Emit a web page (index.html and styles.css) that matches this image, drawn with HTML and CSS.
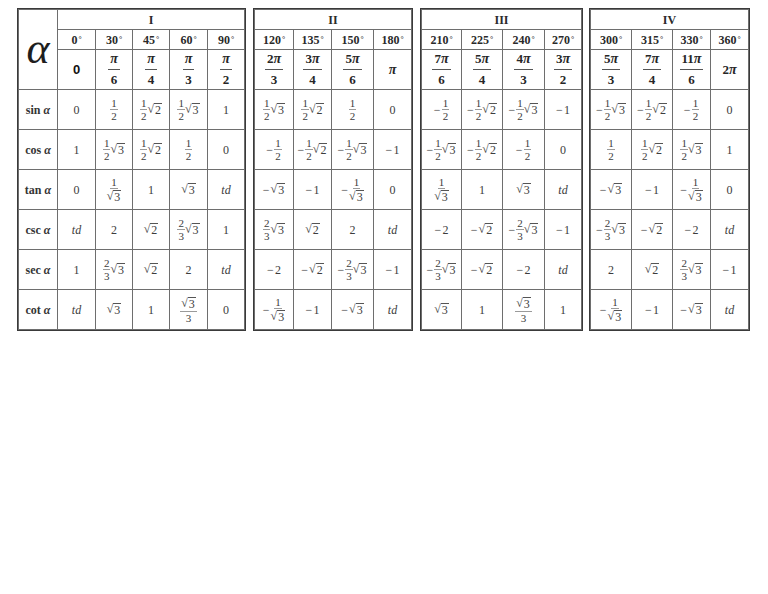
FILE: index.html
```html
<!DOCTYPE html>
<html>
<head>
<meta charset="utf-8">
<link rel="stylesheet" href="styles.css">
</head>
<body>
<div class="page">
  <div class="quad q1">
    <div class="c alpha">α</div>
    <div class="c roman span5">I</div>
    <div class="c deg">0<sup>°</sup></div><div class="c deg">30<sup>°</sup></div><div class="c deg">45<sup>°</sup></div><div class="c deg">60<sup>°</sup></div><div class="c deg">90<sup>°</sup></div>
    <div class="c rad zero">0</div>
    <div class="c rad"><span class="fr"><span class="n"><i>π</i></span><span class="d">6</span></span></div>
    <div class="c rad"><span class="fr"><span class="n"><i>π</i></span><span class="d">4</span></span></div>
    <div class="c rad"><span class="fr"><span class="n"><i>π</i></span><span class="d">3</span></span></div>
    <div class="c rad"><span class="fr"><span class="n"><i>π</i></span><span class="d">2</span></span></div>

    <div class="c lbl">sin <i>α</i></div>
    <div class="c">0</div>
    <div class="c"><span class="fs"><span class="n">1</span><span class="d">2</span></span></div>
    <div class="c"><span class="fs"><span class="n">1</span><span class="d">2</span></span><span class="rt">√<span class="rd">2</span></span></div>
    <div class="c"><span class="fs"><span class="n">1</span><span class="d">2</span></span><span class="rt">√<span class="rd">3</span></span></div>
    <div class="c">1</div>

    <div class="c lbl">cos <i>α</i></div>
    <div class="c">1</div>
    <div class="c"><span class="fs"><span class="n">1</span><span class="d">2</span></span><span class="rt">√<span class="rd">3</span></span></div>
    <div class="c"><span class="fs"><span class="n">1</span><span class="d">2</span></span><span class="rt">√<span class="rd">2</span></span></div>
    <div class="c"><span class="fs"><span class="n">1</span><span class="d">2</span></span></div>
    <div class="c">0</div>

    <div class="c lbl">tan <i>α</i></div>
    <div class="c">0</div>
    <div class="c"><span class="fs"><span class="n">1</span><span class="d"><span class="rt">√<span class="rd">3</span></span></span></span></div>
    <div class="c">1</div>
    <div class="c"><span class="rt">√<span class="rd">3</span></span></div>
    <div class="c td">td</div>

    <div class="c lbl">csc <i>α</i></div>
    <div class="c td">td</div>
    <div class="c">2</div>
    <div class="c"><span class="rt">√<span class="rd">2</span></span></div>
    <div class="c"><span class="fs"><span class="n">2</span><span class="d">3</span></span><span class="rt">√<span class="rd">3</span></span></div>
    <div class="c">1</div>

    <div class="c lbl">sec <i>α</i></div>
    <div class="c">1</div>
    <div class="c"><span class="fs"><span class="n">2</span><span class="d">3</span></span><span class="rt">√<span class="rd">3</span></span></div>
    <div class="c"><span class="rt">√<span class="rd">2</span></span></div>
    <div class="c">2</div>
    <div class="c td">td</div>

    <div class="c lbl">cot <i>α</i></div>
    <div class="c td">td</div>
    <div class="c"><span class="rt">√<span class="rd">3</span></span></div>
    <div class="c">1</div>
    <div class="c"><span class="fs"><span class="n"><span class="rt">√<span class="rd">3</span></span></span><span class="d">3</span></span></div>
    <div class="c">0</div>
  </div>

  <div class="quad q2">
    <div class="c roman span4">II</div>
    <div class="c deg">120<sup>°</sup></div><div class="c deg">135<sup>°</sup></div><div class="c deg">150<sup>°</sup></div><div class="c deg">180<sup>°</sup></div>
    <div class="c rad"><span class="fr"><span class="n">2<i>π</i></span><span class="d">3</span></span></div>
    <div class="c rad"><span class="fr"><span class="n">3<i>π</i></span><span class="d">4</span></span></div>
    <div class="c rad"><span class="fr"><span class="n">5<i>π</i></span><span class="d">6</span></span></div>
    <div class="c rad"><i>π</i></div>

    <div class="c"><span class="fs"><span class="n">1</span><span class="d">2</span></span><span class="rt">√<span class="rd">3</span></span></div>
    <div class="c"><span class="fs"><span class="n">1</span><span class="d">2</span></span><span class="rt">√<span class="rd">2</span></span></div>
    <div class="c"><span class="fs"><span class="n">1</span><span class="d">2</span></span></div>
    <div class="c">0</div>

    <div class="c"><span class="m">−</span><span class="fs"><span class="n">1</span><span class="d">2</span></span></div>
    <div class="c"><span class="m">−</span><span class="fs"><span class="n">1</span><span class="d">2</span></span><span class="rt">√<span class="rd">2</span></span></div>
    <div class="c"><span class="m">−</span><span class="fs"><span class="n">1</span><span class="d">2</span></span><span class="rt">√<span class="rd">3</span></span></div>
    <div class="c"><span class="m">−</span>1</div>

    <div class="c"><span class="m">−</span><span class="rt">√<span class="rd">3</span></span></div>
    <div class="c"><span class="m">−</span>1</div>
    <div class="c"><span class="m">−</span><span class="fs"><span class="n">1</span><span class="d"><span class="rt">√<span class="rd">3</span></span></span></span></div>
    <div class="c">0</div>

    <div class="c"><span class="fs"><span class="n">2</span><span class="d">3</span></span><span class="rt">√<span class="rd">3</span></span></div>
    <div class="c"><span class="rt">√<span class="rd">2</span></span></div>
    <div class="c">2</div>
    <div class="c td">td</div>

    <div class="c"><span class="m">−</span>2</div>
    <div class="c"><span class="m">−</span><span class="rt">√<span class="rd">2</span></span></div>
    <div class="c"><span class="m">−</span><span class="fs"><span class="n">2</span><span class="d">3</span></span><span class="rt">√<span class="rd">3</span></span></div>
    <div class="c"><span class="m">−</span>1</div>

    <div class="c"><span class="m">−</span><span class="fs"><span class="n">1</span><span class="d"><span class="rt">√<span class="rd">3</span></span></span></span></div>
    <div class="c"><span class="m">−</span>1</div>
    <div class="c"><span class="m">−</span><span class="rt">√<span class="rd">3</span></span></div>
    <div class="c td">td</div>
  </div>

  <div class="quad q3">
    <div class="c roman span4">III</div>
    <div class="c deg">210<sup>°</sup></div><div class="c deg">225<sup>°</sup></div><div class="c deg">240<sup>°</sup></div><div class="c deg">270<sup>°</sup></div>
    <div class="c rad"><span class="fr"><span class="n">7<i>π</i></span><span class="d">6</span></span></div>
    <div class="c rad"><span class="fr"><span class="n">5<i>π</i></span><span class="d">4</span></span></div>
    <div class="c rad"><span class="fr"><span class="n">4<i>π</i></span><span class="d">3</span></span></div>
    <div class="c rad"><span class="fr"><span class="n">3<i>π</i></span><span class="d">2</span></span></div>

    <div class="c"><span class="m">−</span><span class="fs"><span class="n">1</span><span class="d">2</span></span></div>
    <div class="c"><span class="m">−</span><span class="fs"><span class="n">1</span><span class="d">2</span></span><span class="rt">√<span class="rd">2</span></span></div>
    <div class="c"><span class="m">−</span><span class="fs"><span class="n">1</span><span class="d">2</span></span><span class="rt">√<span class="rd">3</span></span></div>
    <div class="c"><span class="m">−</span>1</div>

    <div class="c"><span class="m">−</span><span class="fs"><span class="n">1</span><span class="d">2</span></span><span class="rt">√<span class="rd">3</span></span></div>
    <div class="c"><span class="m">−</span><span class="fs"><span class="n">1</span><span class="d">2</span></span><span class="rt">√<span class="rd">2</span></span></div>
    <div class="c"><span class="m">−</span><span class="fs"><span class="n">1</span><span class="d">2</span></span></div>
    <div class="c">0</div>

    <div class="c"><span class="fs"><span class="n">1</span><span class="d"><span class="rt">√<span class="rd">3</span></span></span></span></div>
    <div class="c">1</div>
    <div class="c"><span class="rt">√<span class="rd">3</span></span></div>
    <div class="c td">td</div>

    <div class="c"><span class="m">−</span>2</div>
    <div class="c"><span class="m">−</span><span class="rt">√<span class="rd">2</span></span></div>
    <div class="c"><span class="m">−</span><span class="fs"><span class="n">2</span><span class="d">3</span></span><span class="rt">√<span class="rd">3</span></span></div>
    <div class="c"><span class="m">−</span>1</div>

    <div class="c"><span class="m">−</span><span class="fs"><span class="n">2</span><span class="d">3</span></span><span class="rt">√<span class="rd">3</span></span></div>
    <div class="c"><span class="m">−</span><span class="rt">√<span class="rd">2</span></span></div>
    <div class="c"><span class="m">−</span>2</div>
    <div class="c td">td</div>

    <div class="c"><span class="rt">√<span class="rd">3</span></span></div>
    <div class="c">1</div>
    <div class="c"><span class="fs"><span class="n"><span class="rt">√<span class="rd">3</span></span></span><span class="d">3</span></span></div>
    <div class="c">1</div>
  </div>

  <div class="quad q4">
    <div class="c roman span4">IV</div>
    <div class="c deg">300<sup>°</sup></div><div class="c deg">315<sup>°</sup></div><div class="c deg">330<sup>°</sup></div><div class="c deg">360<sup>°</sup></div>
    <div class="c rad"><span class="fr"><span class="n">5<i>π</i></span><span class="d">3</span></span></div>
    <div class="c rad"><span class="fr"><span class="n">7<i>π</i></span><span class="d">4</span></span></div>
    <div class="c rad"><span class="fr"><span class="n">11<i>π</i></span><span class="d">6</span></span></div>
    <div class="c rad">2<i>π</i></div>

    <div class="c"><span class="m">−</span><span class="fs"><span class="n">1</span><span class="d">2</span></span><span class="rt">√<span class="rd">3</span></span></div>
    <div class="c"><span class="m">−</span><span class="fs"><span class="n">1</span><span class="d">2</span></span><span class="rt">√<span class="rd">2</span></span></div>
    <div class="c"><span class="m">−</span><span class="fs"><span class="n">1</span><span class="d">2</span></span></div>
    <div class="c">0</div>

    <div class="c"><span class="fs"><span class="n">1</span><span class="d">2</span></span></div>
    <div class="c"><span class="fs"><span class="n">1</span><span class="d">2</span></span><span class="rt">√<span class="rd">2</span></span></div>
    <div class="c"><span class="fs"><span class="n">1</span><span class="d">2</span></span><span class="rt">√<span class="rd">3</span></span></div>
    <div class="c">1</div>

    <div class="c"><span class="m">−</span><span class="rt">√<span class="rd">3</span></span></div>
    <div class="c"><span class="m">−</span>1</div>
    <div class="c"><span class="m">−</span><span class="fs"><span class="n">1</span><span class="d"><span class="rt">√<span class="rd">3</span></span></span></span></div>
    <div class="c">0</div>

    <div class="c"><span class="m">−</span><span class="fs"><span class="n">2</span><span class="d">3</span></span><span class="rt">√<span class="rd">3</span></span></div>
    <div class="c"><span class="m">−</span><span class="rt">√<span class="rd">2</span></span></div>
    <div class="c"><span class="m">−</span>2</div>
    <div class="c td">td</div>

    <div class="c">2</div>
    <div class="c"><span class="rt">√<span class="rd">2</span></span></div>
    <div class="c"><span class="fs"><span class="n">2</span><span class="d">3</span></span><span class="rt">√<span class="rd">3</span></span></div>
    <div class="c"><span class="m">−</span>1</div>

    <div class="c"><span class="m">−</span><span class="fs"><span class="n">1</span><span class="d"><span class="rt">√<span class="rd">3</span></span></span></span></div>
    <div class="c"><span class="m">−</span>1</div>
    <div class="c"><span class="m">−</span><span class="rt">√<span class="rd">3</span></span></div>
    <div class="c td">td</div>
  </div>
</div>
</body>
</html>
```

FILE: styles.css
```css
html, body {
  margin: 0;
  padding: 0;
  background: #ffffff;
}

.page {
  display: flex;
  align-items: flex-start;
  padding: 8px 0 0 17px;
  font-family: "Liberation Serif", "DejaVu Serif", serif;
  color: #3c3c3c;
}

.quad {
  display: grid;
  gap: 1px;
  padding: 1px;
  background: #6e6e6e;
  border: 1px solid #3a3a3a;
  grid-template-rows: 19px 19px 39px repeat(6, 39px);
}

.q1 { grid-template-columns: 38px 37px 36px 36px 37px 36px; }
.q2 { grid-template-columns: 38px 37px 41px 37px; margin-left: 7px; }
.q3 { grid-template-columns: 39px 40px 41px 36px; margin-left: 7px; }
.q4 { grid-template-columns: 40px 40px 37px 37px; margin-left: 6px; }

.c {
  background: #ffffff;
  display: flex;
  align-items: center;
  justify-content: center;
  font-size: 12px;
  line-height: 1;
  white-space: nowrap;
}

.alpha {
  grid-row: 1 / span 3;
  font-size: 44px;
  font-style: italic;
  color: #1e1e1e;
  padding: 0 0 2px 0;
}

.span5 { grid-column: 2 / span 5; }
.span4 { grid-column: 1 / span 4; }

.roman {
  font-weight: bold;
  font-size: 12px;
  color: #2a2a2a;
}

.deg {
  font-weight: bold;
  font-size: 12px;
  color: #2a2a2a;
}

.deg sup {
  font-size: 8px;
  vertical-align: top;
  line-height: 1;
  margin-left: 1px;
}

.rad {
  font-weight: bold;
  font-size: 13px;
  color: #262626;
}

.rad i {
  font-size: 14px;
}

.zero {
  font-family: "Liberation Sans", "DejaVu Sans", sans-serif;
  font-size: 13px;
  color: #111111;
}

.lbl {
  font-weight: bold;
  font-size: 12px;
  color: #353535;
}

.lbl i {
  margin-left: 3px;
}

.td {
  font-style: italic;
}

.fr {
  display: inline-flex;
  flex-direction: column;
  align-items: center;
  line-height: 14px;
}

.fr .n {
  border-bottom: 1px solid #555555;
  padding: 0 2px 3px;
}

.fr .d {
  padding-top: 3px;
}

.fs {
  display: inline-flex;
  flex-direction: column;
  align-items: center;
  font-size: 11px;
  line-height: 10px;
}

.fs .n {
  border-bottom: 1px solid #9a9a9a;
  padding: 0 1px 1px;
}

.fs .d {
  padding-top: 1px;
}

.rt {
  display: inline-flex;
  align-items: flex-start;
  font-size: 12px;
  line-height: 13px;
}

.rd {
  border-top: 1px solid #555555;
  line-height: 12px;
  padding: 0 1px;
}

.m {
  margin-right: 1px;
  font-size: 12px;
}
```
